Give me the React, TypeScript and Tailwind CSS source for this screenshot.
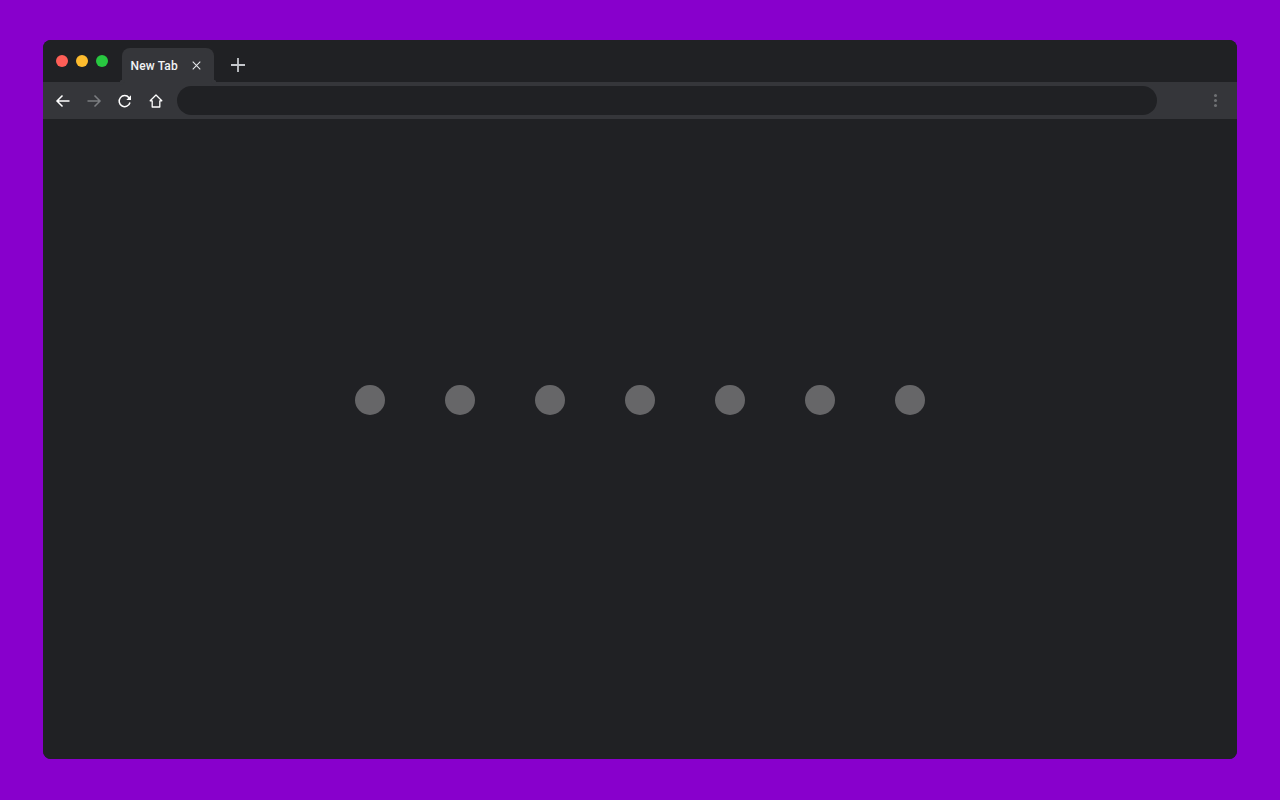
import React from "react";

function Icon({ children, className }: { children: React.ReactNode; className?: string }) {
  return (
    <svg viewBox="0 0 16 16" fill="none" stroke="currentColor" strokeWidth="1.5" className={className}>
      {children}
    </svg>
  );
}

export default function App() {
  return (
    <div className="w-[1280px] h-[800px] bg-[#8800cc] pt-[40px] pl-[43px] overflow-hidden">
      <div className="w-[1194px] h-[718.5px] rounded-[8px] overflow-hidden bg-[#202124] flex flex-col font-['Roboto',sans-serif]">
        <div className="h-[42px] shrink-0 flex items-end pl-[13px] bg-[#202124]">
          <div className="flex gap-[8px] self-start mt-[15px]">
            <span className="w-[12px] h-[12px] rounded-full bg-[#ff5f57]" />
            <span className="w-[12px] h-[12px] rounded-full bg-[#febc2e]" />
            <span className="w-[12px] h-[12px] rounded-full bg-[#28c840]" />
          </div>
          <div className="relative ml-[14px] w-[92px] h-[34px] rounded-t-[8px] flex items-center pl-[8.5px] pr-[12px] justify-between bg-[#35363a]">
            <span className="absolute left-[-5px] bottom-0 w-[5px] h-[5px] rounded-br-[5px] shadow-[3px_3px_0_0_#35363a]" />
            <span className="absolute right-[-5px] bottom-0 w-[5px] h-[5px] rounded-bl-[5px] shadow-[-3px_3px_0_0_#35363a]" />
            <span className="text-[12px] font-medium tracking-[0.15px] text-[#f1f3f4] leading-none pt-[1px]">New Tab</span>
            <Icon className="w-[11px] h-[11px] text-[#e8eaed]">
              <path d="M2.5 2.5 13.5 13.5M13.5 2.5 2.5 13.5" />
            </Icon>
          </div>
          <div className="ml-[16px] mb-[9px] text-[#c4c7cb]">
            <Icon className="w-[16px] h-[16px]">
              <path d="M8 1v14M1 8h14" strokeWidth="1.8" />
            </Icon>
          </div>
        </div>
        <div className="h-[37px] shrink-0 bg-[#35363a] flex items-center pl-[12px] pr-[16px]">
          <div className="flex items-center gap-[15px] text-white">
            <Icon className="w-[16px] h-[16px]">
              <path d="M14.5 8H2M7.5 2.5 2 8l5.5 5.5" />
            </Icon>
            <Icon className="w-[16px] h-[16px] text-[#7b7d80]">
              <path d="M1.5 8H14M8.5 2.5 14 8l-5.5 5.5" />
            </Icon>
            <Icon className="w-[16px] h-[16px]">
              <path d="M12 4.7A5.5 5.5 0 1 0 13 9.5" />
              <path d="M14 2.3V7H9.3Z" fill="currentColor" stroke="none" />
            </Icon>
            <Icon className="w-[16px] h-[16px]">
              <path d="M8 2 2.2 7.8h2V14h7.6V7.8h2Z" strokeWidth="1.3" strokeLinejoin="round" />
            </Icon>
          </div>
          <div className="ml-[13px] w-[980px] h-[29px] rounded-full bg-[#202124]" />
          <div className="ml-auto flex flex-col gap-[2px] mr-[4px]">
            <span className="w-[3px] h-[3px] rounded-full bg-[#6f7174]" />
            <span className="w-[3px] h-[3px] rounded-full bg-[#6f7174]" />
            <span className="w-[3px] h-[3px] rounded-full bg-[#6f7174]" />
          </div>
        </div>
        <div className="flex-1 bg-[#202124] flex items-center pl-[312px] gap-[60px] pb-[78px]">
          {[0, 1, 2, 3, 4, 5, 6].map((i) => (
            <span key={i} className="w-[30px] h-[30px] rounded-full bg-[#666668]" />
          ))}
        </div>
      </div>
    </div>
  );
}
